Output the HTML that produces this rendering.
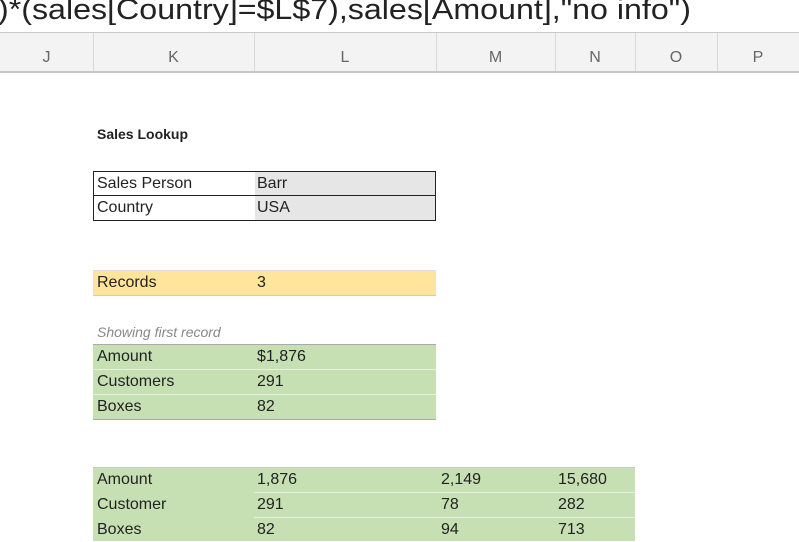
<!DOCTYPE html><html><head><style>
body{margin:0;width:799px;height:540px;overflow:hidden;background:#fff;font-family:"Liberation Sans",sans-serif;position:relative}
.a{position:absolute}
.c{position:absolute;font-size:16px;color:#222;line-height:24px;white-space:nowrap}
.h{position:absolute;top:33px;height:38px;line-height:50px;font-size:16px;color:#666;text-align:center;border-right:1px solid #d8d8d8}
</style></head><body>
<div class="a" style="left:-2px;top:-6px;font-size:29px;color:#222;white-space:nowrap;transform:scaleX(1.11);transform-origin:0 0">)*(sales[Country]=$L$7),sales[Amount],"no info")</div>
<div class="a" style="left:0;top:32px;width:799px;height:1px;background:#c8c8c8"></div>
<div class="a" style="left:0;top:33px;width:799px;height:38px;background:#f3f3f3"></div>
<div class="h" style="left:0;width:93px">J</div>
<div class="h" style="left:93px;width:161px">K</div>
<div class="h" style="left:254px;width:182px">L</div>
<div class="h" style="left:436px;width:119px">M</div>
<div class="h" style="left:555px;width:80px">N</div>
<div class="h" style="left:635px;width:82px">O</div>
<div class="h" style="left:717px;width:82px;border:0">P</div>
<div class="a" style="left:0;top:71px;width:799px;height:2px;background:#c6c6c6"></div>

<div class="c" style="left:97px;top:122px;font-weight:bold;font-size:14px">Sales Lookup</div>

<div class="a" style="left:93px;top:171px;width:341px;height:48px;border:1px solid #222;background:linear-gradient(90deg,#fff 161px,#e6e6e6 161px)"></div>
<div class="a" style="left:93px;top:195px;width:343px;height:1px;background:#222"></div>
<div class="c" style="left:97px;top:172px">Sales Person</div><div class="c" style="left:257px;top:172px">Barr</div>
<div class="c" style="left:97px;top:196px">Country</div><div class="c" style="left:257px;top:196px">USA</div>

<div class="a" style="left:93px;top:270px;width:343px;height:24px;background:#ffe49b;border-top:1px solid #ddd;border-bottom:1px solid #ccc"></div>
<div class="c" style="left:97px;top:271px">Records</div><div class="c" style="left:257px;top:271px">3</div>

<div class="c" style="left:97px;top:320px;font-style:italic;color:#888;font-size:14px">Showing first record</div>
<div class="a" style="left:93px;top:344px;width:343px;height:74px;background:#c6e0b4;border-top:1px solid #aaa;border-bottom:1px solid #aaa"></div>
<div class="a" style="left:93px;top:369px;width:343px;height:1px;background:#e8f0e0"></div>
<div class="a" style="left:93px;top:394px;width:343px;height:1px;background:#e8f0e0"></div>
<div class="c" style="left:97px;top:345px">Amount</div><div class="c" style="left:257px;top:345px">$1,876</div>
<div class="c" style="left:97px;top:370px">Customers</div><div class="c" style="left:257px;top:370px">291</div>
<div class="c" style="left:97px;top:395px">Boxes</div><div class="c" style="left:257px;top:395px">82</div>

<div class="a" style="left:93px;top:467px;width:542px;height:73px;background:#c6e0b4;border-top:1px solid #ccc"></div>
<div class="a" style="left:254px;top:492px;width:381px;height:1px;background:#e8f0e0"></div>
<div class="a" style="left:254px;top:517px;width:381px;height:1px;background:#e8f0e0"></div>
<div class="c" style="left:97px;top:468px">Amount</div><div class="c" style="left:257px;top:468px">1,876</div><div class="c" style="left:441px;top:468px">2,149</div><div class="c" style="left:558px;top:468px">15,680</div>
<div class="c" style="left:97px;top:493px">Customer</div><div class="c" style="left:257px;top:493px">291</div><div class="c" style="left:441px;top:493px">78</div><div class="c" style="left:558px;top:493px">282</div>
<div class="c" style="left:97px;top:518px">Boxes</div><div class="c" style="left:257px;top:518px">82</div><div class="c" style="left:441px;top:518px">94</div><div class="c" style="left:558px;top:518px">713</div>
</body></html>
